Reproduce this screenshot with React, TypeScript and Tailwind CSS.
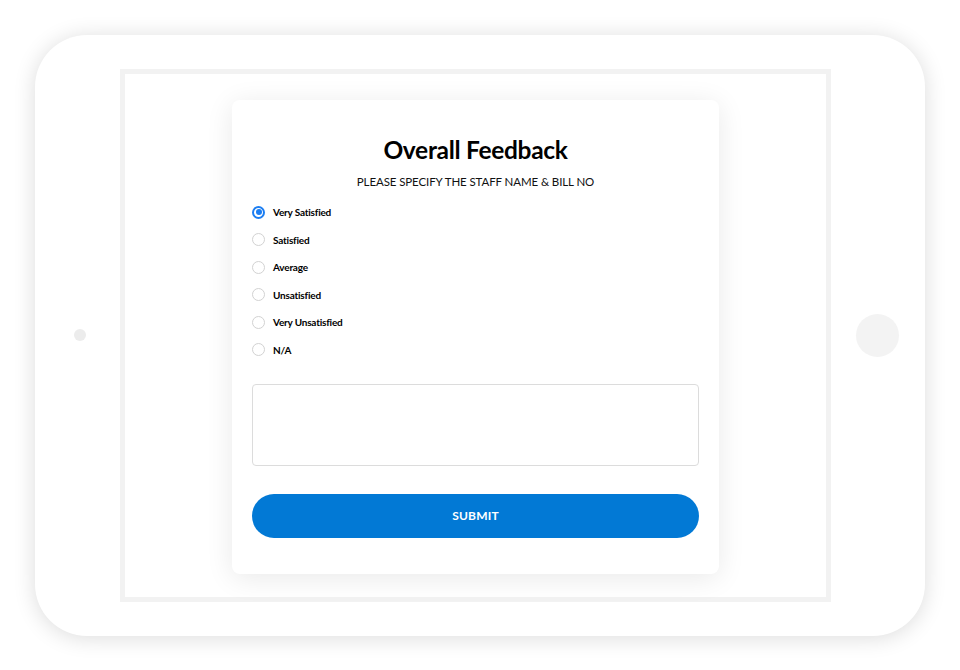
const OPTIONS = ['Very Satisfied', 'Satisfied', 'Average', 'Unsatisfied', 'Very Unsatisfied', 'N/A'];

function Radio({ checked }: { checked: boolean }) {
  if (checked) {
    return (
      <span className="w-[13px] h-[13px] rounded-full border-2 border-[#1c7ef2] flex items-center justify-center shrink-0">
        <span className="w-[6px] h-[6px] rounded-full bg-[#1c7ef2]" />
      </span>
    );
  }
  return <span className="w-[13px] h-[13px] rounded-full border border-[#d2d2d2] bg-white shrink-0" />;
}

export default function App() {
  return (
    <div className="w-[960px] h-[670px] bg-white flex items-center justify-center font-['Lato',sans-serif]">
      {/* Tablet */}
      <div className="w-[890px] h-[601px] bg-white rounded-[52px] shadow-[0_2px_22px_rgba(0,0,0,0.14)] flex items-center">
        <span className="ml-[39px] w-3 h-3 rounded-full bg-[#ececec] shrink-0" />
        {/* Screen */}
        <div className="ml-[34px] w-[711px] h-[533px] border-[5px] border-[#f2f2f2] bg-white shrink-0 flex justify-center pt-[26px]">
          {/* Card */}
          <div className="w-[487px] h-[474px] bg-white rounded-lg shadow-[0_4px_28px_rgba(0,0,0,0.09)] px-5 pt-[34px] flex flex-col">
            <h1 className="text-center text-[24.5px] leading-8 font-bold text-black tracking-[-0.3px]">Overall Feedback</h1>
            <p className="text-center text-[11.5px] leading-4 text-[#111] mt-[8px] uppercase tracking-[-0.1px]">Please specify the staff name &amp; bill no</p>

            <div className="mt-[16px] flex flex-col gap-[14.6px]">
              {OPTIONS.map((o, i) => (
                <label key={o} className="flex items-center gap-2 h-[13px]">
                  <Radio checked={i === 0} />
                  <span className="text-[10px] font-bold text-black leading-none tracking-[-0.2px]">{o}</span>
                </label>
              ))}
            </div>

            <div className="mt-[28px] h-[82px] w-full rounded-[4px] border border-[#dcdcdc] bg-white" />

            <button className="mt-[28px] h-[44px] w-full rounded-full bg-[#0279d5] text-white text-[12px] font-bold tracking-[0.2px]">
              SUBMIT
            </button>
          </div>
        </div>
        <span className="ml-[25px] w-[43px] h-[43px] rounded-full bg-[#f3f3f3] shrink-0" />
      </div>
    </div>
  );
}
